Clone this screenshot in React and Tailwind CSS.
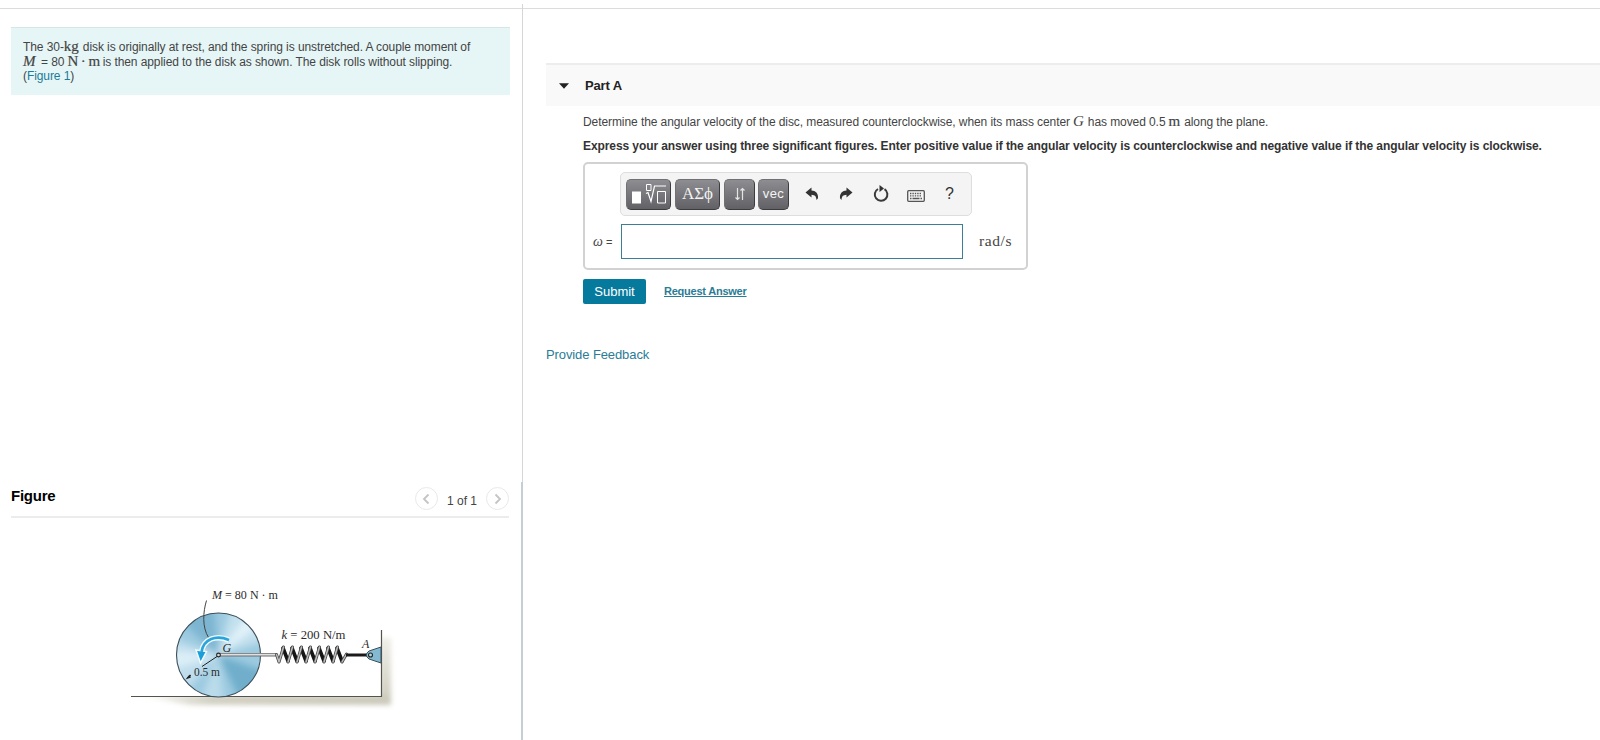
import React, { useState } from 'react';

const Chevron = ({ flip }) => (
    <span className="flex h-[23px] w-[23px] items-center justify-center rounded-full border border-[#e9e9e9]">
        <svg width="8" height="12" viewBox="0 0 8 12" fill="none" stroke="#c4c4c4" strokeWidth="1.8">
            <path d={flip ? 'M1.5 1.5 6 6l-4.5 4.5' : 'M6.5 1.5 2 6l4.5 4.5'} />
        </svg>
    </span>
);

const ToolButton = ({ className, children }) => (
    <button
        className={`flex h-[31px] items-center justify-center rounded-[5px] border border-[#717175] border-r-[#3c3c3f] border-b-[#3c3c3f] bg-linear-to-b from-[#8e8e92] to-[#626266] text-[#f4f4f4] ${className}`}
    >
        {children}
    </button>
);

// Disk, spring and wall support
const DiskFigure = () => (
    <svg width="280" height="130" viewBox="125 580 280 130" className="block font-['Liberation_Serif',serif]">
        <defs>
            <clipPath id="disk">
                <circle cx="218.5" cy="655" r="42" />
            </clipPath>
            <filter id="soft" x="-30%" y="-30%" width="160%" height="160%">
                <feGaussianBlur stdDeviation="3.5" />
            </filter>
            <filter id="shade" x="-20%" y="-20%" width="140%" height="140%">
                <feGaussianBlur stdDeviation="2.6" />
            </filter>
            <linearGradient id="floor" x1="0" x2="1">
                <stop offset="0" stopColor="#d5d3c6" stopOpacity="0" />
                <stop offset="0.3" stopColor="#d2d0c3" />
                <stop offset="1" stopColor="#cbc9ba" />
            </linearGradient>
            <linearGradient id="wall" x1="0" x2="0" y1="0" y2="1">
                <stop offset="0" stopColor="#dcdacd" stopOpacity="0.5" />
                <stop offset="1" stopColor="#cbc9ba" />
            </linearGradient>
        </defs>

        <g filter="url(#shade)">
            <path d="M134 695H391V705H190Z" fill="url(#floor)" />
            <path d="M380 638H391V705H380Z" fill="url(#wall)" />
        </g>
        <path d="M125 580H381V696H125Z" fill="#fff" />
        <path d="M131 696.5H381.5V630" fill="none" stroke="#55534e" strokeWidth="1.2" />

        <g clipPath="url(#disk)">
            <circle cx="218.5" cy="655" r="42" fill="#9ccae0" />
            <g filter="url(#soft)">
                <path d="M218 655 232 604 258 618 268 640Z" fill="#c2e0ee" />
                <path d="M218 655 250 612 262 624Z" fill="#e2f2f9" />
                <path d="M218 655 168 636 168 680 184 694Z" fill="#bfdeed" />
                <path d="M218 655 170 650 172 670Z" fill="#dbeef7" />
                <path d="M218 655 200 702 224 702Z" fill="#badbea" />
                <path d="M218 655 266 672 256 694 240 700Z" fill="#70aecb" />
                <path d="M218 655 182 622 196 608 214 606Z" fill="#7db5d1" />
            </g>
        </g>
        <circle cx="218.5" cy="655" r="42" fill="none" stroke="#3c4e59" strokeWidth="1.1" />

        {/* moment arrow and leader line */}
        <path d="M206.5 600.5C203 612 202 627 208.5 637.5" fill="none" stroke="#444" strokeWidth="1" />
        <path d="M229 640C216 634.500 203.500 639 201.500 652" fill="none" stroke="#f0fafe" strokeWidth="5.500" />
        <path d="M196 650 206.500 651.500 200.500 663Z" fill="#1a9fd9" stroke="#f0fafe" strokeWidth="1.500" />
        <path d="M229 640C216 634.500 203.500 639 201.500 652" fill="none" stroke="#2aa5dc" strokeWidth="2.600" />

        {/* rod */}
        <path d="M220 654.800H277" stroke="#6b6b6b" strokeWidth="3.600" />
        <path d="M220 654.600H277" stroke="#e0e0e0" strokeWidth="1.700" />
        <path d="M217 656.500 202 666.500M191 675 187 678" stroke="#222" strokeWidth="1" />
        <path d="M185.500 679.500 189.500 674.500 191 677.500Z" fill="#222" />
        <circle cx="218.500" cy="655" r="1.900" fill="#d8d8d8" stroke="#222" strokeWidth="1.100" />

        {/* spring */}
        <path
            d="M283 648 288 661M292 648 297 661M301 648 306 661M310 648 315 661M319 648 324 661M328 648 333 661M337 648 342 661"
            fill="none"
            stroke="#151515"
            strokeWidth="3.600"
            strokeLinecap="round"
        />
        <path
            d="M276.500 654.500 279 662 283.500 647M288 662 292.500 647M297 662 301.500 647M306 662 310.500 647M315 662 319.500 647M324 662 328.500 647M333 662 337.500 647M342 662 346.500 654"
            fill="none"
            stroke="#444"
            strokeWidth="3"
            strokeLinecap="round"
            strokeLinejoin="round"
        />
        <path
            d="M276.500 654.500 279 662 283.500 647M288 662 292.500 647M297 662 301.500 647M306 662 310.500 647M315 662 319.500 647M324 662 328.500 647M333 662 337.500 647M342 662 346.500 654"
            fill="none"
            stroke="#bdbdbd"
            strokeWidth="1.500"
            strokeLinecap="round"
            strokeLinejoin="round"
        />
        <path d="M346 655H367" stroke="#1a1a1a" strokeWidth="3" />
        <path d="M381 647 369 651Q363.500 655 369 659L381 663Z" fill="#83bad1" stroke="#3c4e59" strokeWidth="1" />
        <circle cx="370.500" cy="655" r="2" fill="#b8d5e2" stroke="#222" strokeWidth="1.100" />

        <g fill="#2b2b2b" fontSize="11.500">
            <text x="212" y="598.500" textLength="66" lengthAdjust="spacingAndGlyphs"><tspan fontStyle="italic">M</tspan> = 80 N · m</text>
            <text x="281.500" y="639" textLength="64" lengthAdjust="spacingAndGlyphs"><tspan fontStyle="italic">k</tspan> = 200 N/m</text>
            <text x="194" y="675.500" textLength="26" lengthAdjust="spacingAndGlyphs">0.5 m</text>
            <text x="222.500" y="652" fontSize="12" fontStyle="italic">G</text>
            <text x="362" y="647.500" fontSize="12" fontStyle="italic">A</text>
        </g>
    </svg>
);

const ProblemPanel = () => (
    <aside className="flex w-[521px] shrink-0 flex-col">
        <div className="mt-[18px] ml-[11px] h-[68px] w-[499px] border-t border-[#d5e6e5] bg-[#e6f6f7] px-3 pt-[11px] text-[12px] leading-[14.5px] text-[#444]">
            <div className="flex h-[14.5px] items-baseline whitespace-nowrap">
                <span className="tracking-[-0.08px]">The 30-</span>
                <span className="font-['Liberation_Serif',serif] text-[15px] [-webkit-text-stroke:0.2px]">kg</span>
                <span className="ml-1 tracking-[-0.08px]">disk is originally at rest, and the spring is unstretched. A couple moment of</span>
            </div>
            <div className="flex h-[14.5px] items-baseline whitespace-nowrap">
                <span className="w-[14px] font-['Liberation_Serif',serif] text-[15px] italic [-webkit-text-stroke:0.2px]">M</span>
                <span className="ml-1 tracking-[-0.08px]">= 80</span>
                <span className="ml-[3px] font-['Liberation_Serif',serif] text-[15px] tracking-[-0.55px] [-webkit-text-stroke:0.2px]">N · m</span>
                <span className="ml-[3px] tracking-[-0.08px]">is then applied to the disk as shown. The disk rolls without slipping.</span>
            </div>
            <div className="h-[14.5px] pt-px tracking-[-0.08px]">
                (<a className="text-[#1b7b98]">Figure 1</a>)
            </div>
        </div>

        <div className="mt-[387px] ml-[11px] flex h-[36px] w-[498px] items-start justify-between border-b-2 border-[#ececec]">
            <h2 className="mt-1 text-[15px] leading-5 font-bold tracking-[-0.25px] text-black">Figure</h2>
            <div className="mt-[5px] flex items-center text-[12px] text-[#444]">
                <Chevron />
                <span className="mr-[9px] ml-[9px] pt-1 leading-4">1 of 1</span>
                <Chevron flip />
            </div>
        </div>

        <div className="mt-[62px] ml-[125px]">
            <DiskFigure />
        </div>
    </aside>
);

const Toolbar = () => (
    <div className="flex h-[44px] w-[352px] items-center rounded-[5px] border border-[#dedede] bg-[#f4f4f4] pl-[5px]">
        <ToolButton className="w-[45px]">
            <svg width="36" height="22" viewBox="0 0 36 22" fill="none" stroke="#fff">
                <path d="M1 8.500h9v12H1Z" fill="#fff" stroke="none" />
                <path d="M15.500 1.500h4.500v6h-4.500Z" strokeWidth="1" />
                <path d="M15 10.500l2-1 3 9 3.500-15.500H35" strokeWidth="1.200" />
                <path d="M26.500 8.500h8v11.500h-8Z" strokeWidth="1" />
            </svg>
        </ToolButton>
        <ToolButton className="ml-[4px] w-[45px] font-['Liberation_Serif',serif] text-[17px]">ΑΣϕ</ToolButton>
        <ToolButton className="ml-[4px] w-[31px]">
            <svg width="12" height="14" viewBox="0 0 12 14" fill="none" stroke="#e4e4e4" strokeWidth="1.200">
                <path d="M3.500 1v11.500M1.500 10.500l2 2L5.500 10.500M8.500 13V1.500M6.500 3.500l2-2L10.500 3.500" />
            </svg>
        </ToolButton>
        <ToolButton className="ml-[3px] w-[31px] pb-px text-[13px] tracking-[0.4px]">vec</ToolButton>
        <svg width="14" height="14" viewBox="0 0 14 14" className="ml-[16px]" fill="#333">
            <path d="M6.500 .5v3c4 0 7 2.800 6.500 7.800L11.500 13c-.2-3.500-1.500-5-5-5.200V10.500L.5 5.500Z" />
        </svg>
        <svg width="14" height="14" viewBox="0 0 14 14" className="ml-[20px]" fill="#333">
            <path d="M7.500 .5v3c-4 0-7 2.800-6.500 7.800L2.500 13c.2-3.500 1.500-5 5-5.200V10.500l6-5Z" />
        </svg>
        <svg width="18" height="18" viewBox="0 0 18 18" className="ml-[19px]">
            <path d="M12.500 4.200A6.300 6.300 0 1 1 6 4" fill="none" stroke="#3a3a3a" strokeWidth="2" />
            <path d="M7.500 0l4.500 3.500-4.500 3.500Z" fill="#333" />
        </svg>
        <svg width="18" height="12" viewBox="0 0 18 12" className="mt-1 ml-[17px]" fill="none" stroke="#555">
            <rect x="0.700" y="0.700" width="16.600" height="10.600" rx="1" strokeWidth="1.300" />
            <path d="M3 3.500h12M3 5.800h12" strokeDasharray="1.400 1" strokeWidth="1.300" />
            <path d="M3 8.500h1.500M5.500 8.500h7M13.500 8.500h1.500" strokeWidth="1.500" />
        </svg>
        <span className="ml-[20px] text-[16px] text-[#333]">?</span>
    </div>
);

const AnswerPanel = () => {
    const [answer, setAnswer] = useState('');

    return (
        <main className="min-w-0 flex-1 pt-[54px] pl-[23px] text-[12px] text-[#444]">
            <div className="flex h-[43px] items-center border-t-2 border-[#ededed] bg-[#f9f9f9] pl-[13px]">
                <svg width="10" height="6" viewBox="0 0 10 6">
                    <path d="M0 0.300h10L5 5.800Z" fill="#222" />
                </svg>
                <h2 className="ml-[16px] text-[13px] font-bold tracking-[-0.15px] text-[#222]">Part A</h2>
            </div>

            <div className="pl-[37px]">
                <p className="mt-[7px] flex h-4 items-baseline leading-4 whitespace-nowrap">
                    <span className="tracking-[-0.08px]">Determine the angular velocity of the disc, measured counterclockwise, when its mass center</span>
                    <span className="mr-1 ml-[3px] font-['Liberation_Serif',serif] text-[15px] italic">G</span>
                    <span className="tracking-[-0.08px]">has moved 0.5</span>
                    <span className="mr-1 ml-[3px] font-['Liberation_Serif',serif] text-[15px] [-webkit-text-stroke:0.2px]">m</span>
                    <span className="tracking-[-0.08px]">along the plane.</span>
                </p>
                <p className="mt-[9px] text-[12px] leading-4 font-bold tracking-[-0.085px] whitespace-nowrap text-[#333]">
                    Express your answer using three significant figures. Enter positive value if the angular velocity is counterclockwise and negative value if the angular velocity is clockwise.
                </p>

                <div className="mt-[8px] h-[108px] w-[445px] rounded-[5px] border-2 border-[#d2d2d2] pt-[8px]">
                    <div className="pl-[35px]">
                        <Toolbar />
                    </div>
                    <div className="mt-[8px] flex items-center">
                        <label className="w-[36px] pl-2 whitespace-nowrap">
                            <span className="font-['Liberation_Serif',serif] text-[14px] italic">ω</span>
                            <span className="ml-[3px] text-[11px]">=</span>
                        </label>
                        <input
                            value={answer}
                            onChange={(e) => setAnswer(e.target.value)}
                            className="h-[35px] w-[342px] border border-[#3a7f96] bg-white px-2 outline-none"
                        />
                        <span className="ml-[16px] pb-[2px] font-['Liberation_Serif',serif] text-[15.500px] tracking-[0.6px]">rad/s</span>
                    </div>
                </div>

                <div className="mt-[9px] flex items-center">
                    <button className="h-[25px] w-[63px] rounded-[2px] bg-[#067a9c] text-[13px] text-white">Submit</button>
                    <a className="ml-[18px] text-[11px] font-bold tracking-[-0.23px] text-[#2a7c96] underline">Request Answer</a>
                </div>
            </div>

            <a className="mt-[41px] block text-[13px] leading-5 tracking-[-0.1px] text-[#2a7c96]">Provide Feedback</a>
        </main>
    );
};

export default function App() {
    return (
        <div className="flex h-[740px] w-[1600px] flex-col overflow-hidden bg-white pt-2 font-['Liberation_Sans',Arial,sans-serif]">
            <div className="flex flex-1 border-t border-[#dcdcdc]">
                <ProblemPanel />
                <div className="-mt-[5px] flex w-[2px] shrink-0 flex-col">
                    <div className="ml-px h-[478px] border-l border-[#d4d7d9]" />
                    <div className="flex-1 bg-[#c5ced4]" />
                </div>
                <AnswerPanel />
            </div>
        </div>
    );
}
